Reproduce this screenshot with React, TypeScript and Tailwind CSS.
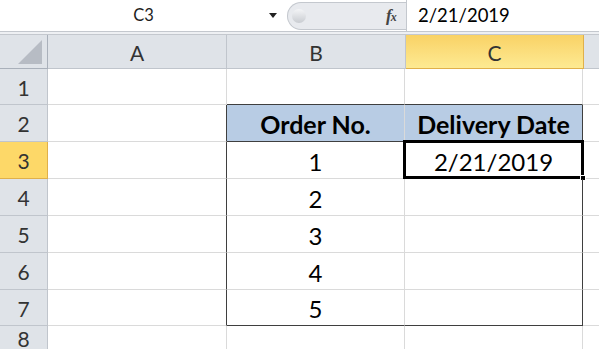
import React from "react";

const rowHeights = [36, 37, 37, 37, 37, 37, 36, 24];
const cols = ["A", "B", "C"];

const cellData: Record<number, [string, string]> = {
  2: ["Order No.", "Delivery Date"],
  3: ["1", "2/21/2019"],
  4: ["2", ""],
  5: ["3", ""],
  6: ["4", ""],
  7: ["5", ""],
};

function FormulaBar() {
  return (
    <div className="flex h-[31px] bg-white">
      <div className="relative flex w-[287px] items-center justify-center">
        <span className="text-[16.5px] text-[#1e1e1e]">C3</span>
        <span className="absolute right-[10px] top-[13px] h-0 w-0 border-x-[4px] border-t-[5px] border-x-transparent border-t-[#222]" />
      </div>
      <div className="mt-[2px] flex h-[28px] w-[119px] items-center justify-between rounded-l-[14px] border border-r-0 border-[#c4c8ce] bg-[#e8eaee] pl-[4px] pr-[10px]">
        <span className="h-[14px] w-[14px] rounded-full bg-gradient-to-b from-[#f4f5f7] to-[#c9ccd1]" />
        <span className="font-['Liberation_Serif'] text-[17px] font-bold italic tracking-tighter text-[#444]">
          f<span className="text-[12px]">x</span>
        </span>
      </div>
      <div className="flex flex-1 items-center border-l border-[#c4c8ce] pl-[11px]">
        <span className="text-[18.5px] text-black">2/21/2019</span>
      </div>
    </div>
  );
}

function ColumnHeaders() {
  return (
    <div className="flex h-[34px]">
      <div className="flex w-[48px] items-end justify-end border-r border-b border-[#a9b0ba] bg-[#dfe3e8] pb-[4px] pr-[5px]">
        <svg width="24" height="24" viewBox="0 0 24 24">
          <polygon points="24,0 24,24 0,24" fill="#b7bcc4" />
        </svg>
      </div>
      {cols.map((c) => {
        const active = c === "C";
        return (
          <div
            key={c}
            className={
              active
                ? "flex w-[178px] items-center justify-center border-r border-b border-[#e0b04a] bg-gradient-to-b from-[#f9d265] to-[#fdea92] pt-[2px] text-[21px] text-[#333]"
                : "flex w-[179px] items-center justify-center border-r border-b border-[#c0c5cc] bg-[#dfe3e8] pt-[2px] text-[21px] text-[#333]"
            }
          >
            {c}
          </div>
        );
      })}
      <div className="flex-1 border-b border-[#c0c5cc] bg-[#dfe3e8]" />
    </div>
  );
}

function Row({ n, h }: { n: number; h: number }) {
  const data = cellData[n];
  const inTable = n >= 2 && n <= 7;
  const header = n === 2;
  const selectedRow = n === 3;
  const gridB = "border-[#dadada]";

  return (
    <div className="flex" style={{ height: h }}>
      <div
        className={
          selectedRow
            ? "flex w-[48px] items-center justify-center border-r border-b border-[#e0b04a] bg-[#fdd868] pt-[2px] text-[21px] text-[#333]"
            : "flex w-[48px] items-center justify-center border-r border-b border-[#c0c5cc] bg-[#dfe3e8] pt-[2px] text-[21px] text-[#333]"
        }
      >
        {n}
      </div>
      {/* A */}
      <div className={`w-[179px] border-b ${gridB} border-r ${inTable ? "border-r-[#3f3f3f]" : ""}`} />
      {/* B */}
      <div
        className={[
          "flex w-[178px] items-center justify-center border-r border-b pt-[3px] text-black",
          gridB,
          header ? "bg-[#b8cce4] text-[25px] font-bold" : "text-[24px]",
          n === 1 || n === 2 || n === 7 ? "border-b-[#3f3f3f]" : "",
        ].join(" ")}
      >
        {data?.[0]}
      </div>
      {/* C */}
      <div
        className={[
          "relative flex w-[178px] items-center justify-center border-r border-b pt-[3px] text-black",
          gridB,
          header ? "bg-[#b8cce4] text-[25px] font-bold" : "text-[24px]",
          inTable ? "border-r-[#3f3f3f]" : "",
          n === 1 || n === 2 || n === 7 ? "border-b-[#3f3f3f]" : "",
        ].join(" ")}
      >
        {data?.[1]}
        {selectedRow && (
          <>
            <span className="pointer-events-none absolute -left-[2px] -top-[2px] -right-[2px] -bottom-[1px] border-[3px] border-black" />
            <span className="absolute -bottom-[3px] -right-[4px] h-[6px] w-[6px] border border-white bg-black" />
          </>
        )}
      </div>
      <div className={`flex-1 border-b ${gridB}`} />
    </div>
  );
}

export default function App() {
  return (
    <div className="h-[349px] w-[599px] overflow-hidden bg-white font-['Lato',sans-serif]">
      <FormulaBar />
      <div className="h-[4px] border-y border-[#c4c8ce] bg-[#eef0f3]" />
      <ColumnHeaders />
      {rowHeights.map((h, i) => (
        <Row key={i} n={i + 1} h={h} />
      ))}
    </div>
  );
}
